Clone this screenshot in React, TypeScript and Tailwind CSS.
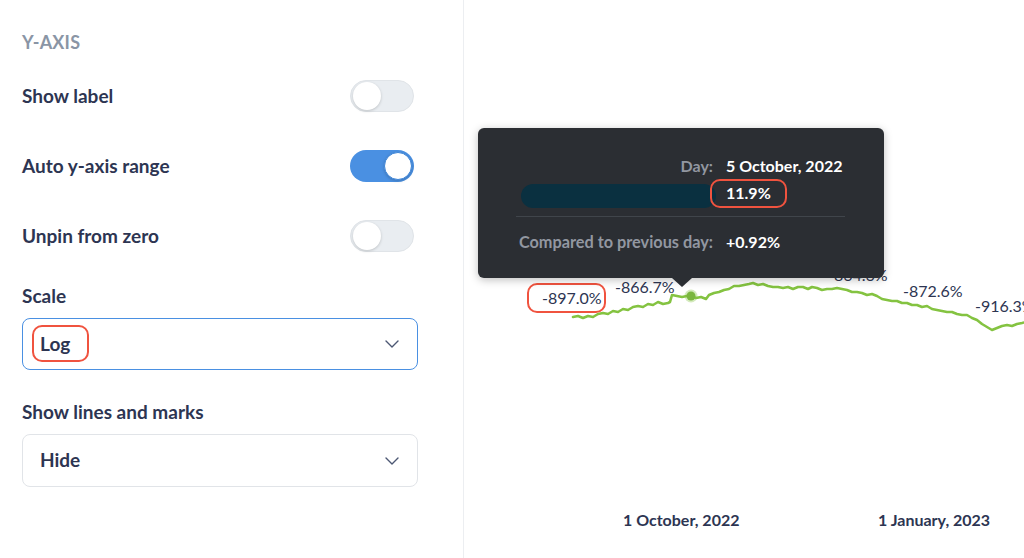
import React from 'react';

const NAVY = 'text-[#2d3552]';

const LINE: [number, number][] = [
  [573, 317], [578, 316], [583, 318], [588, 316], [593, 317], [598, 314], [603, 313], [608, 314],
  [613, 311], [618, 312], [623, 309], [628, 310], [633, 307], [638, 306], [643, 307], [648, 304],
  [653, 305], [658, 302], [663, 304], [668, 303], [670, 302], [672, 295], [677, 296], [682, 297],
  [687, 296], [691, 296], [696, 298], [701, 297], [706, 299], [709, 295], [714, 293], [719, 292],
  [724, 290], [729, 289], [734, 286], [739, 286], [744, 285], [749, 284], [753, 283], [758, 285],
  [763, 284], [768, 286], [773, 287], [778, 287], [783, 288], [788, 287], [793, 289], [798, 287],
  [803, 287], [808, 289], [812, 287], [817, 288], [822, 290], [827, 289], [832, 289], [837, 288],
  [842, 289], [847, 290], [852, 292], [857, 292], [862, 293], [867, 295], [872, 294], [877, 296],
  [882, 299], [887, 300], [892, 301], [897, 301], [902, 303], [907, 303], [912, 305], [917, 305],
  [922, 307], [927, 306], [932, 309], [937, 310], [942, 311], [947, 312], [952, 312], [957, 314],
  [962, 315], [967, 315], [972, 318], [977, 320], [982, 324], [987, 327], [992, 330], [997, 328],
  [1002, 326], [1007, 325], [1012, 326], [1017, 324], [1022, 323], [1026, 322],
];

const Toggle = ({ on }: { on: boolean }) => (
  <div
    className={`w-[64px] h-[32px] rounded-full flex items-center p-[2px] ${
      on ? 'bg-[#4a90e2] justify-end' : 'bg-[#e9edf1] border border-[#e0e4e8] justify-start'
    }`}
  >
    <div
      className={`w-[28px] h-[28px] rounded-full bg-white shadow-[0_1px_3px_rgba(0,0,0,0.18)] ${
        on ? 'border border-[#3d85d8]' : ''
      }`}
    />
  </div>
);

const Chevron = () => (
  <svg width="14" height="8" viewBox="0 0 14 8" fill="none">
    <path d="M1 1 L7 7 L13 1" stroke="#4c5773" strokeWidth="1.4" strokeLinecap="round" strokeLinejoin="round" />
  </svg>
);

const Highlight = ({ className }: { className: string }) => (
  <span className={`absolute border-2 border-[#f0533f] rounded-[10px] pointer-events-none ${className}`} />
);

const ToggleRow = ({ label, on, className = '' }: { label: string; on: boolean; className?: string }) => (
  <div className={`w-[392px] h-[32px] flex items-center justify-between ${className}`}>
    <span className={`text-[19px] font-bold ${NAVY}`}>{label}</span>
    <Toggle on={on} />
  </div>
);

export default function App() {
  const points = LINE.map(([x, y]) => `${x},${y}`).join(' ');

  return (
    <div className="w-[1024px] h-[558px] flex bg-white overflow-hidden font-['Lato','Noto_Sans',sans-serif]">
      {/* settings sidebar */}
      <div className="w-[464px] shrink-0 border-r border-[#eceef1] pl-[22px] pt-[30px]">
        <div className="h-6 flex items-center text-[18px] font-bold text-[#8a95a5] uppercase tracking-[0.2px]">Y-axis</div>
        <ToggleRow label="Show label" on={false} className="mt-[26px]" />
        <ToggleRow label="Auto y-axis range" on={true} className="mt-[38px]" />
        <ToggleRow label="Unpin from zero" on={false} className="mt-[38px]" />

        <div className={`mt-[32px] h-6 flex items-center text-[19px] font-bold ${NAVY}`}>Scale</div>
        <div className="mt-[10px] w-[396px] h-[52px] rounded-[8px] border border-[#4a90e2] flex items-center justify-between pl-[17px] pr-[18px]">
          <span className={`relative text-[19px] font-bold leading-6 ${NAVY}`}>
            Log
            <Highlight className="-left-[8px] -right-[19px] -top-[7px] -bottom-[6px]" />
          </span>
          <Chevron />
        </div>

        <div className={`mt-[30px] h-6 flex items-center text-[19px] font-bold ${NAVY}`}>Show lines and marks</div>
        <div className="mt-[10px] w-[396px] h-[53px] rounded-[8px] border border-[#e1e4e8] flex items-center justify-between pl-[17px] pr-[18px]">
          <span className={`text-[19px] font-bold ${NAVY}`}>Hide</span>
          <Chevron />
        </div>
      </div>

      {/* chart canvas */}
      <div className="relative flex-1">
        <svg className="absolute left-0 top-0" width="560" height="558" viewBox="464 0 560 558">
          <polyline points={points} fill="none" stroke="#84c341" strokeWidth="2.6" strokeLinejoin="round" strokeLinecap="round" />
          <circle cx="691" cy="296" r="6.5" fill="#84c341" opacity="0.35" />
          <circle cx="691" cy="296" r="4.5" fill="#7ab63f" />
        </svg>

        <span className={`absolute left-[78px] top-[286px] leading-6 text-[16px] ${NAVY}`}>
          -897.0%
          <Highlight className="-left-[15px] -right-[4px] -top-[3px] -bottom-[3px]" />
        </span>
        <span className={`absolute left-[151px] top-[275px] leading-6 text-[16px] ${NAVY}`}>-866.7%</span>
        <span className={`absolute left-[364px] top-[263px] leading-6 text-[16px] ${NAVY}`}>-864.6%</span>
        <span className={`absolute left-[439px] top-[279px] leading-6 text-[16px] ${NAVY}`}>-872.6%</span>
        <span className={`absolute left-[511px] top-[294px] leading-6 text-[16px] whitespace-nowrap ${NAVY}`}>-916.3%</span>

        <span className={`absolute left-[159px] top-[508px] leading-6 text-[16px] font-bold ${NAVY}`}>1 October, 2022</span>
        <span className={`absolute left-[414px] top-[508px] leading-6 text-[16px] font-bold ${NAVY}`}>1 January, 2023</span>

        {/* tooltip */}
        <div className="absolute left-[14px] top-[128px] w-[406px] h-[150px] rounded-[6px] bg-[#2b2e33] shadow-[0_2px_8px_rgba(0,0,0,0.25)] pl-[40px] pt-[28px] text-[16px] font-bold">
          <div className="flex h-5 items-center">
            <span className="w-[195px] text-right text-[#9297a1]">Day:</span>
            <span className="ml-[13px] text-white">5 October, 2022</span>
          </div>
          <div className="flex h-[24px] items-center mt-[8px]">
            <div className="w-[195px] shrink-0 pl-[3px]">
              <div className="w-[195px] h-[24px] rounded-full bg-[#0a3040]" />
            </div>
            <span className="relative -top-[3px] ml-[13px] text-white leading-5">
              11.9%
              <Highlight className="-left-[16px] -right-[16px] -top-[4px] -bottom-[5px]" />
            </span>
          </div>
          <div className="mt-[8px] w-[329px] -ml-[2px] h-px bg-[#40454b]" />
          <div className="flex h-5 items-center mt-[15px]">
            <span className="w-[195px] text-right text-[#9297a1] whitespace-nowrap text-[16.3px]">Compared to previous day:</span>
            <span className="ml-[13px] text-white">+0.92%</span>
          </div>
        </div>
        <div className="absolute left-[208px] top-[278px] w-0 h-0 border-l-[10px] border-r-[10px] border-t-[9px] border-l-transparent border-r-transparent border-t-[#2b2e33]" />
      </div>
    </div>
  );
}
